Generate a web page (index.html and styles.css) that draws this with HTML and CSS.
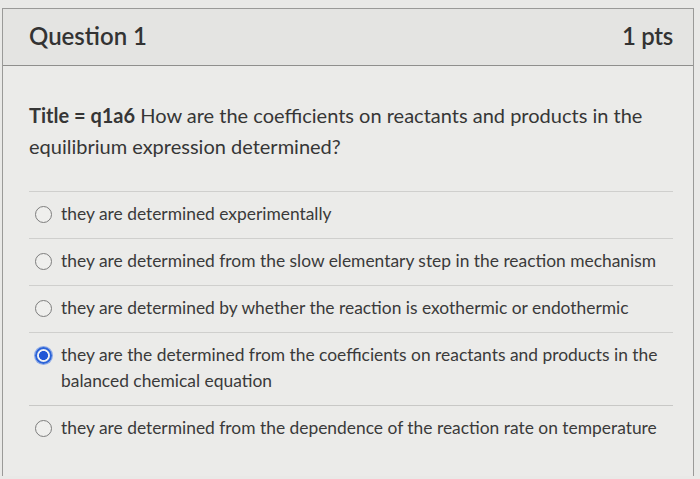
FILE: index.html
```html
<!DOCTYPE html>
<html>
<head>
<meta charset="utf-8">
<link rel="stylesheet" href="styles.css">
</head>
<body>
<div class="card">
  <div class="header">
    <span class="title">Question 1</span>
    <span class="pts">1 pts</span>
  </div>
  <div class="content">
    <p class="question"><strong>Title = q1a6</strong> How are the coefficients on reactants and products in the equilibrium expression determined?</p>
    <ul class="answers">
      <li class="answer"><span class="radio"></span><span class="label">they are determined experimentally</span></li>
      <li class="answer"><span class="radio"></span><span class="label">they are determined from the slow elementary step in the reaction mechanism</span></li>
      <li class="answer"><span class="radio"></span><span class="label">they are determined by whether the reaction is exothermic or endothermic</span></li>
      <li class="answer"><span class="radio checked"></span><span class="label">they are the determined from the coefficients on reactants and products in the balanced chemical equation</span></li>
      <li class="answer"><span class="radio"></span><span class="label">they are determined from the dependence of the reaction rate on temperature</span></li>
    </ul>
  </div>
</div>
</body>
</html>
```

FILE: styles.css
```css
html, body {
  margin: 0;
  padding: 0;
  background: #e9e9e7;
}
body {
  font-family: Lato, "Open Sans", sans-serif;
  color: #3a3a3a;
  padding: 8px 6px 0 2px;
  height: 479px;
  box-sizing: border-box;
  overflow: hidden;
}
.card {
  border: 1px solid #9a9a98;
  border-bottom: none;
  background: #ebebe9;
  height: 468px;
  box-sizing: border-box;
}
.header {
  display: flex;
  justify-content: space-between;
  align-items: center;
  height: 56px;
  padding: 0 20px 0 26px;
  background: #e4e4e2;
  border-bottom: 1px solid #8f8f8d;
}
.title, .pts {
  font-size: 24px;
  font-weight: 600;
  color: #333;
  padding-bottom: 4px;
}
.pts {
  letter-spacing: -0.3px;
}
.content {
  padding: 34px 20px 0 26px;
}
.question {
  margin: 0 0 29px 0;
  font-size: 20px;
  line-height: 31px;
  color: #363636;
}
.question strong {
  font-weight: 700;
}
.answers {
  list-style: none;
  margin: 0;
  padding: 0;
}
.answer {
  display: flex;
  align-items: flex-start;
  border-top: 1px solid #cfcfcd;
  padding: 9px 0 11px 6px;
  font-size: 17.4px;
  line-height: 26px;
  color: #3a3a3a;
}
.answer:last-child {
  border-top: 1px solid #c8c8c6;
}
.radio {
  flex: none;
  width: 17px;
  height: 17px;
  box-sizing: border-box;
  border: 1.5px solid #7d7d7d;
  border-radius: 50%;
  margin: 4.5px 9px 0 0;
  background: #efefed;
}
.radio.checked {
  border: 2px solid #2b63d8;
  background: radial-gradient(circle, #1f55d6 0 4.2px, #eef0f4 4.8px);
  box-shadow: 0 0 0 1px #8aa8e8;
}
```
